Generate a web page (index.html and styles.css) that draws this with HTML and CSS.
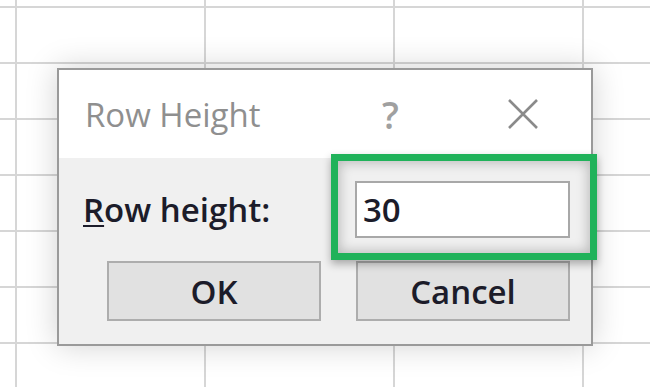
FILE: index.html
```html
<!DOCTYPE html>
<html lang="en">
<head>
  <meta charset="UTF-8">
  <title>Row Height</title>
  <link rel="stylesheet" href="styles.css">
</head>
<body>

<div class="dialog">
  <div class="titlebar">
    <span class="title">Row Height</span>
    <span class="tb-btn help">?</span>
    <span class="tb-btn close">
      <svg width="30" height="30" viewBox="0 0 30 30">
        <path d="M1 1 L29 29 M29 1 L1 29" stroke="#8a8a8a" stroke-width="2.6" fill="none"/>
      </svg>
    </span>
  </div>

  <div class="content">
    <div class="field-row">
      <label for="row-height"><u>R</u>ow height:</label>
      <div class="input-wrap">
        <input type="text" id="row-height" value="30">
        <div class="highlight"></div>
      </div>
    </div>

    <div class="button-row">
      <button type="button">OK</button>
      <button type="button">Cancel</button>
    </div>
  </div>
</div>

</body>
</html>
```

FILE: styles.css
```css
body {
  margin: 0;
  width: 650px;
  height: 387px;
  overflow: hidden;
  font-family: "Open Sans", "Noto Sans", sans-serif;
  background-color: #fff;
  background-image:
    linear-gradient(to right, #d6d6d6 2px, transparent 2px),
    linear-gradient(to bottom, #d6d6d6 2px, transparent 2px);
  background-size: 189px 56px;
  background-position: 15px 6px;
}

/* dialog floats over the sheet */
.dialog {
  position: absolute;
  left: 57px;
  top: 68px;
  width: 536px;
  height: 278px;
  box-sizing: border-box;
  border: 2px solid #9a9a9a;
  background: #f0f0f0;
  box-shadow: 0 0 30px rgba(0,0,0,0.18);
}

.titlebar {
  display: flex;
  align-items: center;
  height: 88px;
  background: #fff;
}
.title {
  flex: 1;
  padding-left: 26px;
  font-size: 33px;
  color: #8f8f8f;
}
.tb-btn {
  width: 133px;
  height: 88px;
  display: flex;
  align-items: center;
  justify-content: center;
}
.help {
  font-size: 37px;
  font-weight: 600;
  color: #a0a0a0;
  padding-right: 2px;
  box-sizing: border-box;
}
.close svg {
  margin-right: 3px;
}

.content {
  padding: 23px 21px 23px 24px;
}

.field-row {
  display: flex;
  align-items: center;
}
label {
  font-size: 33px;
  font-weight: 600;
  color: #1c1c2a;
}
label u {
  text-decoration-thickness: 2px;
  text-underline-offset: 3px;
}
.input-wrap {
  position: relative;
  margin-left: auto;
}
input {
  display: block;
  width: 215px;
  height: 57px;
  box-sizing: border-box;
  border: 2px solid #a8a8a8;
  padding: 0 0 0 6px;
  font-family: "Open Sans", "Noto Sans", sans-serif;
  font-size: 33px;
  font-weight: 600;
  color: #1c1c2a;
  background: #fff;
  outline: none;
}

/* green annotation box around the input */
.highlight {
  position: absolute;
  left: -24px;
  top: -27px;
  right: -27px;
  bottom: -22px;
  border: 7px solid #20b25a;
  box-shadow: 0 4px 8px rgba(0,0,0,0.3), inset 0 0 12px 2px rgba(0,0,0,0.22);
  pointer-events: none;
}

.button-row {
  display: flex;
  justify-content: flex-end;
  gap: 35px;
  margin-top: 23px;
}
button {
  width: 214px;
  height: 60px;
  border: 2px solid #adadad;
  background: #e1e1e1;
  font-family: "Open Sans", "Noto Sans", sans-serif;
  font-size: 33px;
  font-weight: 600;
  color: #1c1c2a;
  padding: 0;
}
```
